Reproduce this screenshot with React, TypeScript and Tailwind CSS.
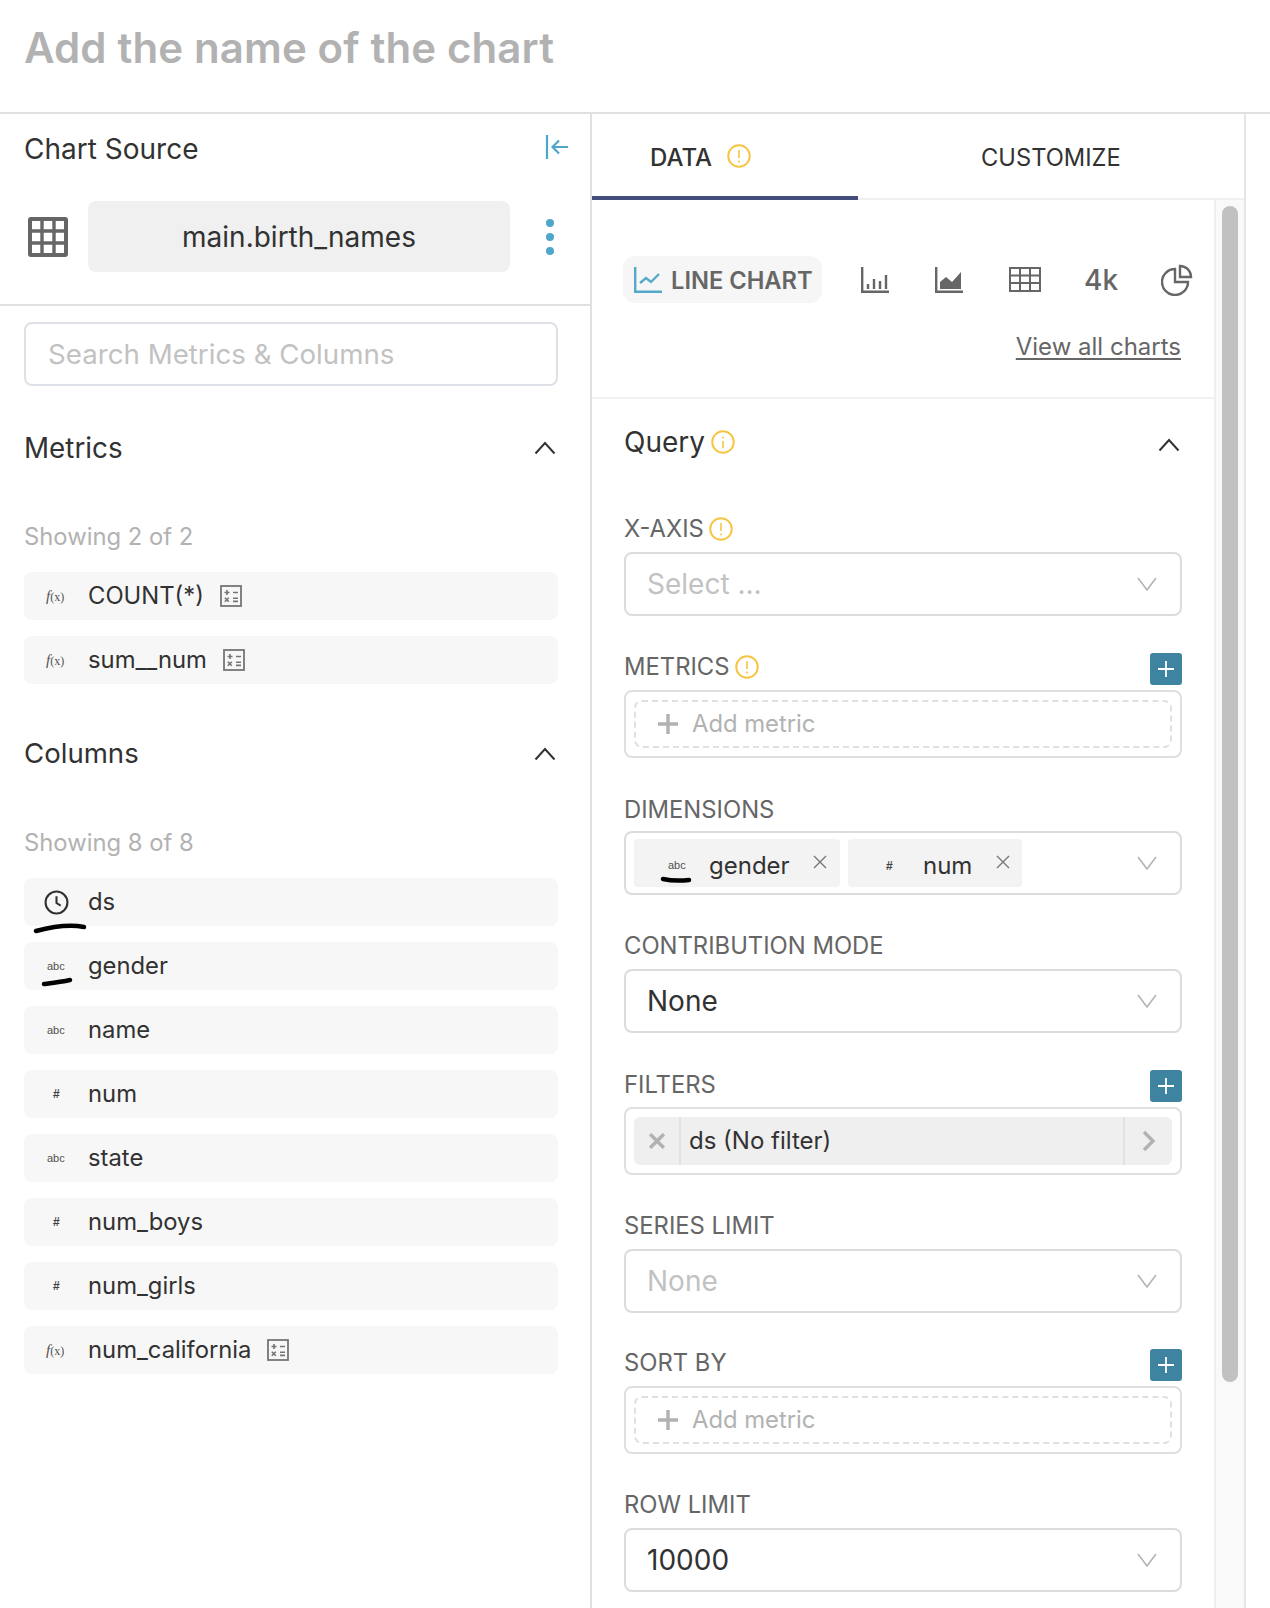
import React from "react";

const Warn = ({ info = false, className = "" }: { info?: boolean; className?: string }) => (
  <svg viewBox="0 0 24 24" className={`w-[24px] h-[24px] shrink-0 ${className}`} fill="none">
    <circle cx="12" cy="12" r="10.75" stroke="#f6c544" strokeWidth="2" />
    {info ? (
      <>
        <line x1="12" y1="11" x2="12" y2="18" stroke="#f6c544" strokeWidth="1.6" />
        <circle cx="12" cy="7.5" r="1" fill="#f6c544" />
      </>
    ) : (
      <>
        <line x1="12" y1="6" x2="12" y2="14" stroke="#f6c544" strokeWidth="1.6" />
        <circle cx="12" cy="17.5" r="1" fill="#f6c544" />
      </>
    )}
  </svg>
);

const Caret = () => (
  <svg viewBox="0 0 22 14" className="w-[22px] h-[14px]" fill="none">
    <polyline points="1.5,12.5 11,2 20.5,12.5" stroke="#323232" strokeWidth="2" />
  </svg>
);

const Chevron = () => (
  <svg viewBox="0 0 20 14" className="w-[20px] h-[14px] shrink-0" fill="none">
    <polyline points="1,1 10,13 19,1" stroke="#b4b4b4" strokeWidth="1.6" />
  </svg>
);

const Calc = () => (
  <svg viewBox="0 0 22 22" className="w-[22px] h-[22px] shrink-0" fill="none" stroke="#757575">
    <rect x="1" y="1" width="20" height="20" strokeWidth="1.8" />
    <path d="M4.5 7.5h5M7 5v5M13 7.5h5M4.8 12.8l4 4M8.8 12.8l-4 4M13 13.2h5M13 16.4h5" strokeWidth="1.6" />
  </svg>
);

const Fx = () => (
  <span className="w-[64px] pl-[22px] shrink-0 text-[12px] text-[#505050] [font-family:'Liberation_Serif',serif]">
    <span className="italic text-[15px]">f</span>(x)
  </span>
);
const Abc = () => (
  <span className="w-[64px] pl-[23px] shrink-0 text-[11px] text-[#505050] [font-family:'Liberation_Sans',sans-serif]">abc</span>
);
const Hash = () => (
  <span className="w-[64px] pl-[29px] shrink-0 text-[12px] font-bold text-[#404040] [font-family:'Liberation_Sans',sans-serif]">#</span>
);
const Clock = () => (
  <span className="w-[64px] pl-[20px] shrink-0 flex items-center">
    <svg viewBox="0 0 24 24" className="w-[25px] h-[25px]" fill="none" stroke="#323232" strokeWidth="2">
      <circle cx="12" cy="12" r="10.5" />
      <polyline points="12,6 12,12.5 16,15" />
    </svg>
  </span>
);

const Row = ({ icon, name, calc = false }: { icon: React.ReactNode; name: string; calc?: boolean }) => (
  <div className="flex items-center h-[48px] w-[534px] rounded-[8px] bg-[#f7f7f7] text-[23.8px] text-[#323232]">
    {icon}
    <span>{name}</span>
    {calc && <span className="ml-[16px] flex items-center"><Calc /></span>}
  </div>
);

const Plus = () => (
  <span className="flex items-center justify-center w-[32px] h-[32px] rounded-[3px] bg-[#3e83a0]">
    <svg viewBox="0 0 18 18" className="w-[18px] h-[18px]" stroke="#ffffff" strokeWidth="1.8">
      <path d="M9 1v16M1 9h16" />
    </svg>
  </span>
);

const Label = ({ text, warn, plus, className = "", textClass = "" }: { text: string; warn?: boolean; plus?: boolean; className?: string; textClass?: string }) => (
  <div className={`flex items-center justify-between h-[32px] ${className}`}>
    <span className={`flex items-center gap-[5px] text-[23.8px] text-[#666666] ${textClass}`}>
      {text}
      {warn && <Warn />}
    </span>
    {plus && <Plus />}
  </div>
);

const SelectBox = ({ text, muted, className = "" }: { text: string; muted?: boolean; className?: string }) => (
  <div className={`flex items-center justify-between h-[64px] border-2 border-[#dcdcdc] rounded-[8px] pl-[21px] pr-[23px] text-[28px] ${muted ? "text-[#c2c2c2]" : "text-[#323232]"} ${className}`}>
    <span>{text}</span>
    <Chevron />
  </div>
);

const AddMetric = () => (
  <div className="h-[68px] border-2 border-[#dfdfdf] rounded-[8px] p-[8px]">
    <div className="flex items-center h-[48px] border-2 border-dashed border-[#e0e0e0] rounded-[8px] pl-[22px] text-[23.8px] text-[#b2b2b2]">
      <svg viewBox="0 0 20 20" className="w-[20px] h-[20px] mr-[14px]" stroke="#b2b2b2" strokeWidth="3.4">
        <path d="M10 0v20M0 10h20" />
      </svg>
      Add metric
    </div>
  </div>
);

const Scribble = ({ className, width, height, d }: { className: string; width: number; height: number; d: string }) => (
  <svg viewBox={`0 0 ${width} ${height}`} width={width} height={height} className={`absolute ${className}`} fill="none">
    <path d={d} stroke="#000000" strokeWidth="4.5" strokeLinecap="round" />
  </svg>
);

export default function App() {
  return (
    <div className="relative w-[1270px] h-[1608px] overflow-hidden bg-white [font-family:Inter,sans-serif]">
      <header className="h-[114px] border-b-2 border-[#e0e0e0] pl-[24px] pt-[24px]">
        <h1 className="text-[42px] leading-[48px] tracking-[0.12px] font-semibold text-[#b2b2b2]">Add the name of the chart</h1>
      </header>

      <div className="flex h-[1494px]">
        <aside className="relative w-[592px] shrink-0 border-r-2 border-[#e0e0e0]">
          <div className="h-[192px] border-b-2 border-[#e0e0e0]">
            <div className="flex items-center justify-between h-[68px] pl-[24px] pr-[21px]">
              <span className="text-[28px] text-[#323232] pt-[2px]">Chart Source</span>
              <svg viewBox="0 0 24 24" className="w-[24px] h-[24px] -mt-[2px]" fill="none" stroke="#4ea7c9" strokeWidth="2.2">
                <path d="M2 0v24M23 12H8M14 5.5L7.5 12l6.5 6.5" />
              </svg>
            </div>
            <div className="flex items-center pl-[28px] mt-[19px]">
              <svg viewBox="0 0 40 40" className="w-[40px] h-[40px]" fill="none" stroke="#666666" strokeWidth="4">
                <rect x="2" y="2" width="36" height="36" rx="1" />
                <path d="M14 2v36M26 2v36M2 14h36M2 26h36" strokeWidth="3.4" />
              </svg>
              <div className="flex items-center justify-center w-[422px] h-[71px] ml-[20px] rounded-[8px] bg-[#f0f0f0] text-[28px] text-[#323232]">
                main.birth_names
              </div>
              <span className="flex flex-col gap-[6px] ml-[36px]">
                <span className="w-[8px] h-[8px] rounded-full bg-[#4ea7c9]" />
                <span className="w-[8px] h-[8px] rounded-full bg-[#4ea7c9]" />
                <span className="w-[8px] h-[8px] rounded-full bg-[#4ea7c9]" />
              </span>
            </div>
          </div>

          <div className="pl-[24px]">
            <div className="flex items-center w-[534px] h-[64px] mt-[16px] border-2 border-[#dde0e6] rounded-[8px] pl-[22px] pt-[1px] text-[27.7px] text-[#c2c2c2]">
              Search Metrics &amp; Columns
            </div>

            <div className="flex items-center justify-between w-[534px] h-[32px] mt-[46px] pr-[2px]">
              <span className="text-[27.8px] text-[#323232] pt-[1px]">Metrics</span>
              <Caret />
            </div>
            <div className="h-[32px] mt-[57px] leading-[32px] text-[23.8px] text-[#b2b2b2]">Showing 2 of 2</div>
            <div className="flex flex-col gap-[16px] mt-[19px]">
              <Row icon={<Fx />} name="COUNT(*)" calc />
              <Row icon={<Fx />} name="sum__num" calc />
            </div>

            <div className="flex items-center justify-between w-[534px] h-[32px] mt-[54px] pr-[2px]">
              <span className="text-[27.6px] text-[#323232]">Columns</span>
              <Caret />
            </div>
            <div className="h-[32px] mt-[56px] pt-[1px] leading-[32px] text-[23.8px] text-[#b2b2b2]">Showing 8 of 8</div>
            <div className="flex flex-col gap-[16px] mt-[20px]">
              <Row icon={<Clock />} name="ds" />
              <Row icon={<Abc />} name="gender" />
              <Row icon={<Abc />} name="name" />
              <Row icon={<Hash />} name="num" />
              <Row icon={<Abc />} name="state" />
              <Row icon={<Hash />} name="num_boys" />
              <Row icon={<Hash />} name="num_girls" />
              <Row icon={<Fx />} name="num_california" calc />
            </div>
          </div>
          <Scribble className="left-[33px] top-[808px]" width={54} height={12} d="M3 9C18 5 36 2 51 5" />
          <Scribble className="left-[41px] top-[863px]" width={32} height={10} d="M3 7C11 6 20 5 29 3" />
        </aside>

        <main className="w-[654px] shrink-0 border-r-2 border-[#e6e6e6] flex flex-col">
          <div className="flex h-[86px] border-b-2 border-[#f0f0f0] shrink-0">
            <div className="flex items-center w-[266px] h-[86px] pl-[58px] pt-[2px] border-b-4 border-[#444e7c] text-[24px] text-[#323232] font-medium gap-[15px]">
              <span className="pt-[3px]">DATA</span> <Warn />
            </div>
            <div className="flex items-center flex-1 h-[84px] pl-[123px] pt-[4px] text-[23.7px] text-[#323232]">CUSTOMIZE</div>
          </div>

          <div className="flex flex-1 min-h-0">
            <div className="w-[624px] shrink-0 border-r-2 border-[#efefef]">
              <div className="h-[199px] border-b-2 border-[#f0f0f0]">
                <div className="flex items-center pt-[56px] pl-[31px]">
                  <div className="flex items-center w-[199px] h-[47px] rounded-[12px] bg-[#f6f6f6] pl-[11px]">
                    <svg viewBox="0 0 28 26" className="w-[28px] h-[26px]" fill="none" stroke="#56a8c9" strokeWidth="2.4">
                      <path d="M1.2 0v24.8h27" />
                      <path d="M6 16l6-5 5 4 8-8" strokeWidth="2.4" />
                    </svg>
                    <span className="ml-[9px] pt-[2px] text-[23.7px] font-semibold text-[#666666] whitespace-nowrap">LINE CHART</span>
                  </div>
                  <svg viewBox="0 0 28 26" className="w-[28px] h-[26px] ml-[39px]" fill="none" stroke="#666666" strokeWidth="2.4">
                    <path d="M1.2 0v24.8h27" />
                    <path d="M7 17v5M13 12v10M19 14v8M25 8v14" strokeWidth="2.4" />
                  </svg>
                  <svg viewBox="0 0 28 26" className="w-[28px] h-[26px] ml-[46px]" fill="none" stroke="#666666" strokeWidth="2.4">
                    <path d="M1.2 0v24.8h27" />
                    <path d="M5 22V15l6-5 6 5 9-10v17z" fill="#666666" stroke="none" />
                  </svg>
                  <svg viewBox="0 0 32 25" className="w-[32px] h-[25px] ml-[46px]" fill="none" stroke="#666666" strokeWidth="2">
                    <rect x="1" y="1" width="30" height="23" />
                    <path d="M11 1v23M21 1v23M1 8.5h30M1 16h30" />
                  </svg>
                  <span className="ml-[43px] w-[32px] text-[28px] font-medium text-[#666666]">4k</span>
                  <svg viewBox="0 0 32 32" className="w-[32px] h-[32px] ml-[45px]" fill="none" stroke="#666666" strokeWidth="2.4">
                    <path d="M14 5a13 13 0 1 0 13 13H14z" />
                    <path d="M19 2a11 11 0 0 1 11 11H19z" />
                  </svg>
                </div>
                <div className="flex justify-end pr-[33px] mt-[28px]">
                  <span className="text-[24px] leading-[32px] text-[#666666] underline underline-offset-[3px]">View all charts</span>
                </div>
              </div>

              <div className="px-[32px]">
                <div className="flex items-center justify-between h-[85px]">
                  <span className="flex items-center gap-[6px] text-[28px] text-[#323232]">
                    Query <Warn info />
                  </span>
                  <span className="mr-[2px] mt-[6px]"><Caret /></span>
                </div>

                <Label text="X-AXIS" warn className="mt-[29px]" />
                <SelectBox text="Select ..." muted className="mt-[7px]" />

                <Label text="METRICS" warn plus className="mt-[37px]" textClass="pb-[4px]" />
                <div className="mt-[5px]"><AddMetric /></div>

                <Label text="DIMENSIONS" className="mt-[36px]" />
                <div className="flex items-center justify-between h-[64px] mt-[5px] border-2 border-[#dcdcdc] rounded-[8px] pl-[8px] pr-[23px]">
                  <div className="flex items-center gap-[8px]">
                    <div className="flex items-center w-[206px] h-[48px] rounded-[4px] bg-[#f3f3f3] text-[24px] text-[#323232]">
                      <span className="w-[75px] pl-[34px] pt-[5px] shrink-0 text-[11px] text-[#505050] [font-family:'Liberation_Sans',sans-serif]">abc</span>
                      <span className="pt-[5px]">gender</span>
                      <span className="ml-auto mr-[13px] mb-[2px] flex"><svg viewBox="0 0 14 14" className="w-[14px] h-[14px]" stroke="#777777" strokeWidth="1.4"><path d="M1 1l12 12M13 1L1 13" /></svg></span>
                    </div>
                    <div className="flex items-center w-[174px] h-[48px] rounded-[4px] bg-[#f3f3f3] text-[24px] text-[#323232]">
                      <span className="w-[75px] pl-[38px] pt-[5px] shrink-0 text-[12px] font-bold text-[#404040] [font-family:'Liberation_Sans',sans-serif]">#</span>
                      <span className="pt-[5px]">num</span>
                      <span className="ml-auto mr-[12px] mb-[2px] flex"><svg viewBox="0 0 14 14" className="w-[14px] h-[14px]" stroke="#777777" strokeWidth="1.4"><path d="M1 1l12 12M13 1L1 13" /></svg></span>
                    </div>
                  </div>
                  <Chevron />
                </div>

                <Label text="CONTRIBUTION MODE" className="mt-[35px]" />
                <SelectBox text="None" className="mt-[7px]" />

                <Label text="FILTERS" plus className="mt-[37px]" textClass="pb-[2px]" />
                <div className="h-[68px] mt-[5px] border-2 border-[#dfdfdf] rounded-[8px] p-[8px]">
                  <div className="flex items-center h-[48px] rounded-[6px] bg-[#efefef] text-[24px] text-[#323232]">
                    <span className="flex items-center justify-center w-[47px] h-full border-r-2 border-[#e2e2e2]">
                      <svg viewBox="0 0 14 14" className="w-[16px] h-[16px]" stroke="#b2b2b2" strokeWidth="3"><path d="M1 1l12 12M13 1L1 13" /></svg>
                    </span>
                    <span className="ml-[8px]">ds (No filter)</span>
                    <span className="flex items-center justify-center ml-auto w-[49px] h-full border-l-2 border-[#e2e2e2]">
                      <svg viewBox="0 0 14 22" className="w-[14px] h-[22px]" fill="none" stroke="#b2b2b2" strokeWidth="3.4"><path d="M2 2l9 9-9 9" /></svg>
                    </span>
                  </div>
                </div>

                <Label text="SERIES LIMIT" className="mt-[35px]" />
                <SelectBox text="None" muted className="mt-[7px]" />

                <Label text="SORT BY" plus className="mt-[36px]" textClass="pb-[4px]" />
                <div className="mt-[5px]"><AddMetric /></div>

                <Label text="ROW LIMIT" className="mt-[35px]" />
                <SelectBox text="10000" className="mt-[7px]" />
              </div>
            </div>
            <div className="flex-1 bg-[#f9f9f9] pl-[6px] pt-[6px]">
              <div className="w-[16px] h-[1176px] rounded-full bg-[#c1c1c1]" />
            </div>
          </div>
        </main>
      </div>
      <Scribble className="left-[660px] top-[875px]" width={32} height={10} d="M3 4C12 6 20 6 29 5" />
    </div>
  );
}
